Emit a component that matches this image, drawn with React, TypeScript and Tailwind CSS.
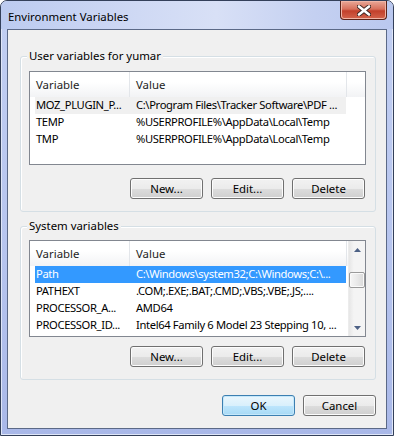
import React from "react";

type Row = { name: string; value: string; sel?: "active" | "inactive" };

const USER_ROWS: Row[] = [
  { name: "MOZ_PLUGIN_P...", value: "C:\\Program Files\\Tracker Software\\PDF ...", sel: "inactive" },
  { name: "TEMP", value: "%USERPROFILE%\\AppData\\Local\\Temp" },
  { name: "TMP", value: "%USERPROFILE%\\AppData\\Local\\Temp" },
];

const SYSTEM_ROWS: Row[] = [
  { name: "Path", value: "C:\\Windows\\system32;C:\\Windows;C:\\...", sel: "active" },
  { name: "PATHEXT", value: ".COM;.EXE;.BAT;.CMD;.VBS;.VBE;.JS;...." },
  { name: "PROCESSOR_A...", value: "AMD64" },
  { name: "PROCESSOR_ID...", value: "Intel64 Family 6 Model 23 Stepping 10, ..." },
];

function Button({ label, primary }: { label: string; primary?: boolean }) {
  return (
    <button
      type="button"
      className={
        primary
          ? "w-[73px] h-[21px] rounded-[3px] border border-[#3c7fb1] bg-[linear-gradient(180deg,#eaf6fd_0%,#d9f0fc_50%,#bee6fd_50%,#a7d9f5_100%)] shadow-[inset_0_0_0_1px_#c5e8fb] leading-none text-black"
          : "w-[73px] h-[21px] rounded-[3px] border border-[#707070] bg-[linear-gradient(180deg,#f2f2f2_0%,#ebebeb_50%,#dddddd_50%,#cfcfcf_100%)] shadow-[inset_0_0_0_1px_#fcfcfc] leading-none text-black"
      }>
      {label}
    </button>
  );
}

function ListView({ rows, height, scroll }: { rows: Row[]; height: string; scroll?: boolean }) {
  return (
    <div className={`flex border border-[#828790] bg-white overflow-hidden ${height}`}>
      <div className="flex-1 flex flex-col">
        <div className="flex h-[25px] bg-[linear-gradient(180deg,#ffffff_0%,#ffffff_40%,#f2f3f5_100%)] text-[#1e1e1e]">
          <div className="w-[100px] border-r border-[#e3e6ea] pl-[6px] flex items-center">Variable</div>
          <div className="w-[217px] border-r border-[#e3e6ea] pl-[6px] flex items-center">Value</div>
          <div className="flex-1" />
        </div>
        <div className="flex flex-col text-[11.2px] tracking-[-0.35px]">
          {rows.map((r) => (
            <div
              key={r.name}
              className={`ml-[5px] w-[311px] h-[17px] flex items-center whitespace-nowrap ${
                r.sel === "active"
                  ? "bg-[#3399ff] text-white"
                  : r.sel === "inactive"
                  ? "bg-[#f0f0f0] text-black"
                  : "text-black"
              }`}>
              <div className="w-[94px] pl-[1px] overflow-hidden">{r.name}</div>
              <div className="w-[217px] pl-[7px] overflow-hidden">{r.value}</div>
            </div>
          ))}
        </div>
      </div>
      {scroll && (
        <div className="w-[17px] flex flex-col bg-[linear-gradient(90deg,#e6e6e6,#f4f4f4_30%,#f4f4f4)] border-l border-[#ececec]">
          <div className="h-[17px] flex items-center justify-center">
            <svg width="7" height="4" viewBox="0 0 7 4">
              <path d="M3.5 0 L7 4 L0 4 Z" fill="#4d6185" />
            </svg>
          </div>
          <div className="flex-1 relative">
            <div className="absolute left-0 top-[14px] w-[16px] h-[16px] rounded-[2px] border border-[#9a9a9a] bg-[linear-gradient(90deg,#f6f6f6,#e9e9e9_50%,#d9d9d9)] shadow-[inset_0_0_0_1px_#fafafa]" />
          </div>
          <div className="h-[17px] flex items-center justify-center">
            <svg width="7" height="4" viewBox="0 0 7 4">
              <path d="M0 0 L7 0 L3.5 4 Z" fill="#4d6185" />
            </svg>
          </div>
        </div>
      )}
    </div>
  );
}

function Group({
  title,
  className,
  children,
}: {
  title: string;
  className: string;
  children: React.ReactNode;
}) {
  return (
    <div className={`relative border border-[#d5dfe5] rounded-[3px] shadow-[inset_1px_1px_0_#ffffff] pl-[8px] pr-[9px] ${className}`}>
      <span className="absolute left-[6px] top-[-9px] leading-[15px] px-[2px] bg-[#f0f0f0] text-black">{title}</span>
      {children}
    </div>
  );
}

export default function App() {
  return (
    <div className="w-[394px] h-[436px] bg-white font-['Noto_Sans',sans-serif] text-[11.4px]">
      <div className="relative w-[394px] h-[436px] flex flex-col rounded-t-[7px] border border-[#34405a] bg-[linear-gradient(180deg,#c2cff2_0%,#b6c4ee_60%,#a9b8e8_100%)] shadow-[inset_0_0_0_1px_#dfe6f8]">
        <div className="h-[28px] flex items-center pl-[7px] pt-[3px] bg-[linear-gradient(90deg,#bccbf0_0%,#cfd9f4_35%,#d8e0f6_55%,#c4d0f1_80%,#bac8ef_100%)] rounded-t-[6px] text-black">
          Environment Variables
        </div>

        <div className="absolute left-[339px] top-0 w-[47px] h-[19px] rounded-b-[4px] border border-t-0 border-[#5a2319] bg-[linear-gradient(180deg,#e9a898_0%,#d7705c_45%,#c2402b_55%,#d3644c_100%)] shadow-[inset_0_0_0_1px_#f0b5a6] flex items-center justify-center">
          <svg width="14" height="11" viewBox="0 0 14 11">
            <path d="M2 1.5 L12 9.5 M12 1.5 L2 9.5" stroke="#3b2420" strokeWidth="4.4" strokeLinecap="round" />
            <path d="M2 1.5 L12 9.5 M12 1.5 L2 9.5" stroke="#ffffff" strokeWidth="2.6" strokeLinecap="round" />
          </svg>
        </div>

        <div className="mx-[6px] h-[400px] border border-[#5b6987] bg-[#f0f0f0] pl-[12px] pr-[10px] flex flex-col">
          <Group title="User variables for yumar" className="mt-[26px] pt-[14px] pb-[12px]">
            <ListView rows={USER_ROWS} height="h-[94px]" />
            <div className="mt-[13px] pr-[1px] flex justify-end gap-[8px]">
              <Button label="New..." />
              <Button label="Edit..." />
              <Button label="Delete" />
            </div>
          </Group>

          <Group title="System variables" className="mt-[14px] pt-[13px] pb-[12px]">
            <ListView rows={SYSTEM_ROWS} height="h-[97px]" scroll />
            <div className="mt-[9px] pr-[1px] flex justify-end gap-[8px]">
              <Button label="New..." />
              <Button label="Edit..." />
              <Button label="Delete" />
            </div>
          </Group>

          <div className="mt-[15px] flex justify-end gap-[8px]">
            <Button label="OK" primary />
            <Button label="Cancel" />
          </div>
        </div>
      </div>
    </div>
  );
}
